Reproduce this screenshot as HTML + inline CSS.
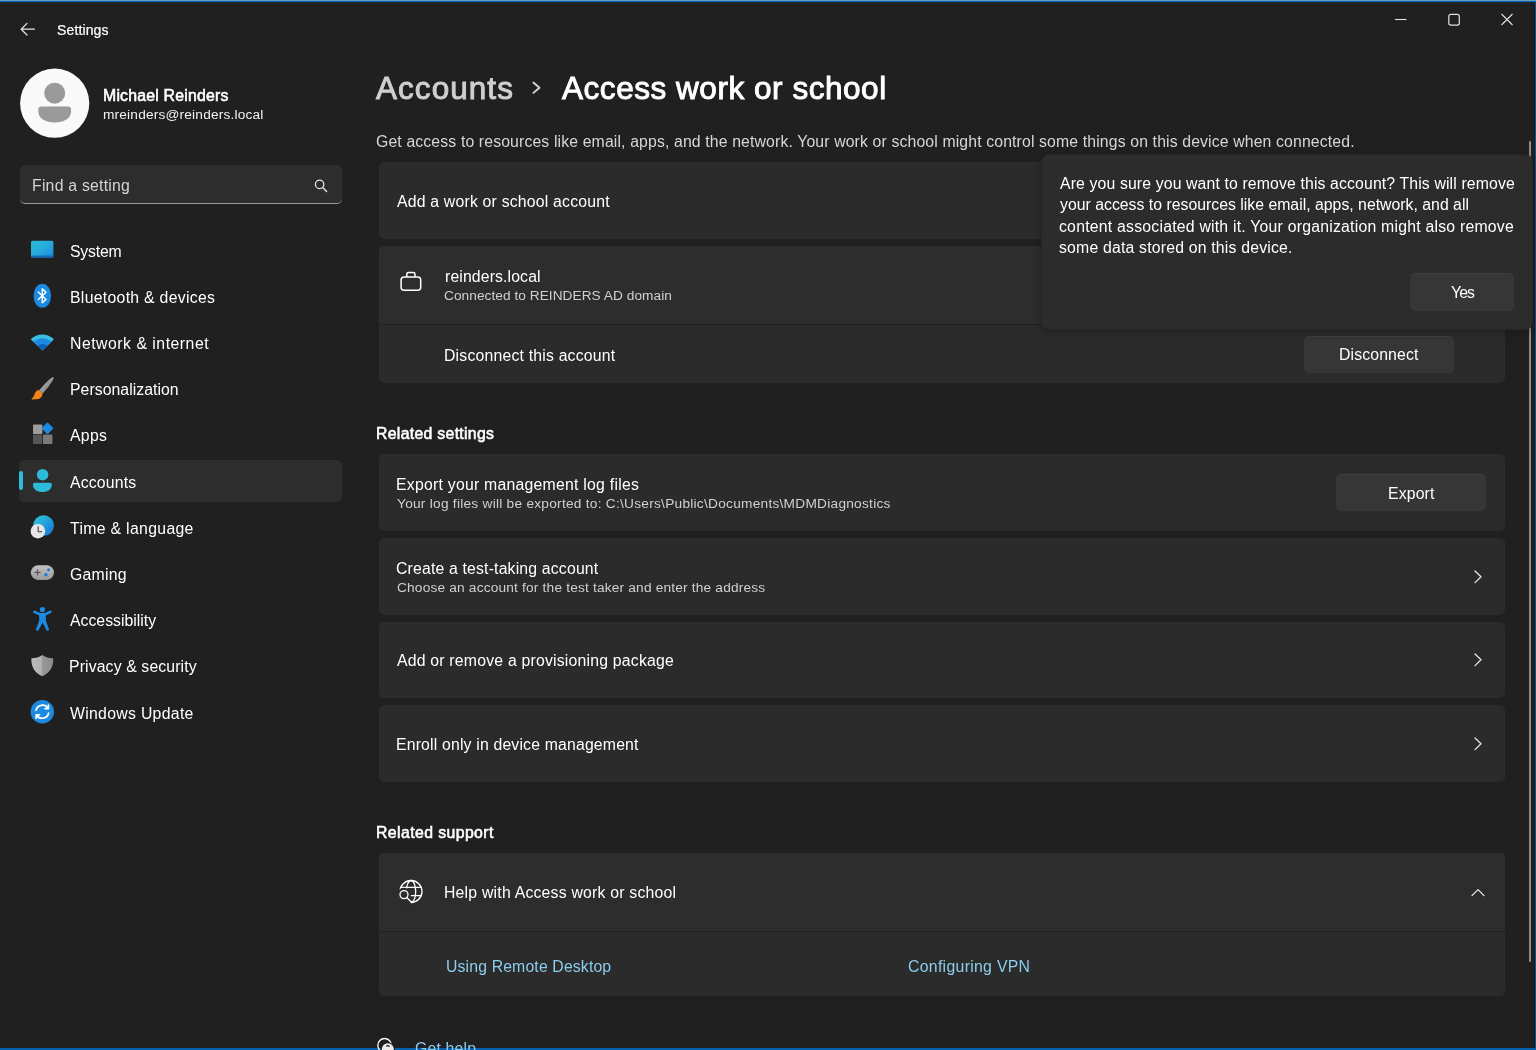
<!DOCTYPE html>
<html lang="en">
<head>
<meta charset="utf-8">
<title>Settings</title>
<style>
*{box-sizing:border-box;margin:0;padding:0}
html,body{width:1536px;height:1050px;overflow:hidden;background:#202020}
body{font-family:"Liberation Sans",sans-serif;color:#fff;position:relative}
.abs{position:absolute}
.t{position:absolute;white-space:pre;line-height:1;color:#fff;will-change:transform}
.card{position:absolute;left:378.5px;width:1126.5px;background:#2b2b2b;border-radius:5px}
.btn{position:absolute;background:#363636;border-radius:5px;border-top:1px solid #3e3e3e}
</style>
</head>
<body>
<!-- window frame -->
<div class="abs" style="left:0;top:0;width:1536px;height:1px;background:#6a9cc0"></div>
<div class="abs" style="left:0;top:1px;width:1536px;height:1px;background:#0a62b4"></div>
<div class="abs" style="left:0;top:2px;width:1536px;height:1px;background:#1b2a38"></div>
<div class="abs" style="left:0;top:1048px;width:1536px;height:2px;background:#0560b0"></div>
<div class="abs" style="left:1535px;top:2px;width:1px;height:1046px;background:#0e4f8c"></div>
<div class="abs" style="left:1534px;top:3px;width:1px;height:1045px;background:#1c1c1c"></div>

<!-- title bar -->
<svg class="abs" style="left:19px;top:21px" width="18" height="16" viewBox="0 0 18 16"><path d="M8 2.4 L2.2 8.2 L8 14 M2.6 8.2 H15.4" fill="none" stroke="#e4e4e4" stroke-width="1.25" stroke-linecap="round" stroke-linejoin="round"/></svg>
<div class="t" id="tSettings" style="left:57.0px;top:22.7px;font-size:14px;color:#ffffff;-webkit-text-stroke:0.22px #ffffff;letter-spacing:0.132px">Settings</div>
<svg class="abs" style="left:1390px;top:10px" width="130" height="20" viewBox="0 0 130 20">
 <path d="M5 9.5 H16.5" stroke="#e0e0e0" stroke-width="1.1" fill="none"/>
 <rect x="58.8" y="4.45" width="10.5" height="10.6" rx="2" fill="none" stroke="#e0e0e0" stroke-width="1.2"/>
 <path d="M111.5 4 L122.5 15 M122.5 4 L111.5 15" stroke="#e0e0e0" stroke-width="1.1" fill="none"/>
</svg>

<!-- avatar -->
<svg class="abs" style="left:19px;top:68px" width="71" height="71" viewBox="0 0 71 71">
 <circle cx="35.7" cy="35.2" r="34.6" fill="#f9f9f9"/>
 <circle cx="35.7" cy="25.2" r="10.5" fill="#9a9a9a"/>
 <path d="M19.3 41.6 A3.2 3.2 0 0 1 22.5 38.4 H48.9 A3.2 3.2 0 0 1 52.1 41.6 V43 C52.1 50.6 45 54.4 35.7 54.4 C26.4 54.4 19.3 50.6 19.3 43 Z" fill="#9a9a9a"/>
</svg>
<div class="t" id="tName" style="left:103.0px;top:87.5px;font-size:15.8px;color:#ffffff;-webkit-text-stroke:0.57px #ffffff;letter-spacing:0.225px">Michael Reinders</div>
<div class="t" id="tMail" style="left:103.0px;top:107.7px;font-size:13.7px;color:#f2f2f2;letter-spacing:0.184px">mreinders@reinders.local</div>

<!-- search -->
<div class="abs" style="left:19.5px;top:165px;width:322.5px;height:38.5px;background:#2d2d2d;border-radius:5px;border-bottom:1px solid #9a9a9a;overflow:hidden"></div>
<div class="t" id="tFind" style="left:32.0px;top:177.9px;font-size:15.8px;color:#d4d4d4;letter-spacing:0.230px">Find a setting</div>
<svg class="abs" style="left:312px;top:177px" width="18" height="18" viewBox="0 0 18 18"><circle cx="7.6" cy="7.4" r="4.2" fill="none" stroke="#e6e6e6" stroke-width="1.3"/><path d="M10.7 10.6 L14.6 14.5" stroke="#e6e6e6" stroke-width="1.4" stroke-linecap="round"/></svg>

<!-- nav -->
<div class="abs" style="left:19px;top:460px;width:323px;height:42px;background:#2d2d2d;border-radius:5px"></div>
<div class="abs" style="left:19px;top:470.6px;width:4.4px;height:19.8px;background:#30bcd9;border-radius:2.2px"></div>
<div class="t" id="n1" style="left:70.0px;top:243.6px;font-size:15.8px;color:#ffffff;letter-spacing:-0.206px">System</div>
<div class="t" id="n2" style="left:70.0px;top:289.8px;font-size:15.8px;color:#ffffff;letter-spacing:0.293px">Bluetooth &amp; devices</div>
<div class="t" id="n3" style="left:70.0px;top:336.0px;font-size:15.8px;color:#ffffff;letter-spacing:0.509px">Network &amp; internet</div>
<div class="t" id="n4" style="left:70.0px;top:382.2px;font-size:15.8px;color:#ffffff;letter-spacing:0.045px">Personalization</div>
<div class="t" id="n5" style="left:70.0px;top:428.4px;font-size:15.8px;color:#ffffff;letter-spacing:0.334px">Apps</div>
<div class="t" id="n6" style="left:70.0px;top:474.6px;font-size:15.8px;color:#ffffff;letter-spacing:0.168px">Accounts</div>
<div class="t" id="n7" style="left:70.0px;top:520.8px;font-size:15.8px;color:#ffffff;letter-spacing:0.326px">Time &amp; language</div>
<div class="t" id="n8" style="left:70.0px;top:567.0px;font-size:15.8px;color:#ffffff;letter-spacing:0.245px">Gaming</div>
<div class="t" id="n9" style="left:70.0px;top:613.2px;font-size:15.8px;color:#ffffff;letter-spacing:0.010px">Accessibility</div>
<div class="t" id="n10" style="left:69.0px;top:659.4px;font-size:15.8px;color:#ffffff;letter-spacing:0.126px">Privacy &amp; security</div>
<div class="t" id="n11" style="left:70.0px;top:705.6px;font-size:15.8px;color:#ffffff;letter-spacing:0.304px">Windows Update</div>
<svg class="abs" style="left:24px;top:232px" width="40" height="500" viewBox="24 232 40 500">
<defs>
 <linearGradient id="gSys" x1="0" y1="0" x2="1" y2="1"><stop offset="0" stop-color="#2bbad8"/><stop offset="0.45" stop-color="#27aedb"/><stop offset="1" stop-color="#1a86dc"/></linearGradient>
 <linearGradient id="gGlobe" x1="0" y1="0" x2="1" y2="1"><stop offset="0.25" stop-color="#2bb8d8"/><stop offset="0.75" stop-color="#1a86de"/></linearGradient>
 <linearGradient id="gBrush" x1="0" y1="0" x2="1" y2="1"><stop offset="0" stop-color="#b4b4b4"/><stop offset="1" stop-color="#7c7c7c"/></linearGradient>
 <linearGradient id="gShield" x1="0" y1="0" x2="1" y2="0"><stop offset="0" stop-color="#bcbcbc"/><stop offset="0.5" stop-color="#b0b0b0"/><stop offset="0.5" stop-color="#989898"/><stop offset="1" stop-color="#8c8c8c"/></linearGradient>
 <linearGradient id="gPad" x1="0" y1="0" x2="0" y2="1"><stop offset="0" stop-color="#c2c2c2"/><stop offset="1" stop-color="#9a9a9a"/></linearGradient>
</defs>
<!-- system -->
<rect x="31" y="240.8" width="22.4" height="16.8" rx="1.6" fill="url(#gSys)"/>
<rect x="31" y="255.6" width="22.4" height="2" fill="#1466b4"/>
<!-- bluetooth -->
<rect x="33.7" y="283.8" width="17.2" height="24" rx="8.6" ry="10.8" fill="#1b8ae0"/>
<path d="M38.3 292 L46 299.4 L42.3 302.8 V288.8 L46 292.2 L38.3 299.6" fill="none" stroke="#fff" stroke-width="1.4" stroke-linejoin="round" stroke-linecap="round"/>
<!-- network -->
<path d="M42.6 350.6 L30.7 339.3 A16.6 16.6 0 0 1 53.9 339.3 Z" fill="#3bc0e0"/>
<path d="M42.6 350.6 L33.6 342 A12.6 12.6 0 0 1 51.4 342 Z" fill="#1b8ae0"/>
<path d="M42.6 350.6 L37.8 346 A6.6 6.6 0 0 1 47.3 346 Z" fill="#0f60b4"/>
<!-- personalization -->
<path d="M52.2 377.2 C53.6 376.6 54 378 53.2 379.4 C50.2 384.6 46.6 389.4 42.6 393.4 L39.2 390.2 C43 385.6 47.6 380.6 52.2 377.2 Z" fill="url(#gBrush)"/>
<path d="M39 390 L42.6 393.4 C42.4 397 39.6 399.2 36 399.2 C34.2 399.2 32.6 399.6 31.4 399.2 C33.4 397.6 34 395.8 34.8 393.6 C35.6 391.4 37 390.2 39 390 Z" fill="#f08418"/>
<!-- apps -->
<rect x="33" y="424.6" width="9.4" height="9.4" rx="1" fill="#9c9c9c"/>
<rect x="33" y="434.6" width="9.4" height="9.4" rx="1" fill="#565656"/>
<rect x="43" y="434.6" width="9.4" height="9.4" rx="1" fill="#7a7a7a"/>
<rect x="43.2" y="424" width="8.6" height="8.6" rx="1" fill="#1b8ae0" transform="rotate(45 47.5 428.3)"/>
<!-- accounts -->
<circle cx="42.6" cy="474.7" r="5.8" fill="#2dbad9"/>
<path d="M32.9 484.6 A1.9 1.9 0 0 1 34.8 482.7 H50 A1.9 1.9 0 0 1 51.9 484.6 C51.9 489.6 47.6 492.1 42.4 492.1 C37.2 492.1 32.9 489.6 32.9 484.6 Z" fill="#2dbad9"/>
<!-- time & language -->
<circle cx="43.6" cy="525.6" r="10.4" fill="url(#gGlobe)"/>
<circle cx="37.9" cy="531.2" r="7.3" fill="#e6e6e6"/>
<path d="M38.2 526.8 V531.6 H41.6" fill="none" stroke="#555" stroke-width="1.3" stroke-linecap="round" stroke-linejoin="round"/>
<!-- gaming -->
<rect x="30.8" y="565.3" width="23.2" height="14.6" rx="7.3" fill="url(#gPad)"/>
<path d="M35 572.4 H40 M37.5 569.9 V574.9" stroke="#5a5a5a" stroke-width="1.3" stroke-linecap="round"/>
<circle cx="48.6" cy="569.8" r="1.5" fill="#1b7ad8"/>
<circle cx="46" cy="574.8" r="1.7" fill="#1b7ad8"/>
<!-- accessibility -->
<circle cx="42.4" cy="609.6" r="2.6" fill="#1b8ae0"/>
<path d="M33.2 611.2 C33.6 610.4 34.4 610.4 35.2 610.8 L40 613 H44.8 L49.6 610.8 C50.4 610.4 51.2 610.4 51.6 611.2 C52 612 51.6 612.6 50.8 613 L45.8 615.6 V620.6 L48.8 628.8 C49.2 629.8 48.8 630.6 48 630.8 C47.2 631 46.6 630.6 46.2 629.8 L42.6 622.4 L38.8 629.8 C38.4 630.6 37.8 631 37 630.8 C36.2 630.6 35.8 629.8 36.2 628.8 L39.2 620.6 V615.6 L34 613 C33.2 612.6 32.8 612 33.2 611.2 Z" fill="#1b8ae0"/>
<!-- privacy -->
<path d="M42.3 655 C45.4 657.2 49 658.2 53.2 658.2 C53.6 666 50.6 672.4 42.3 676.2 C34 672.4 31 666 31.4 658.2 C35.6 658.2 39.2 657.2 42.3 655 Z" fill="url(#gShield)"/>
<!-- windows update -->
<circle cx="42.3" cy="711.7" r="11.7" fill="#1b8ae0"/>
<g fill="none" stroke="#fff" stroke-width="1.7" stroke-linecap="round" stroke-linejoin="round">
 <path d="M36 710.2 A6.6 6.6 0 0 1 47.8 708"/>
 <path d="M48.4 705.2 V708.6 H45"/>
 <path d="M48.6 713.2 A6.6 6.6 0 0 1 36.8 715.4"/>
 <path d="M36.2 718.2 V714.8 H39.6"/>
</g>
</svg>

<div class="t" id="hAcc" style="left:376.0px;top:73.3px;font-size:31.5px;color:#cfcfcf;-webkit-text-stroke:0.94px #cfcfcf;letter-spacing:1.047px">Accounts</div>
<svg class="abs" style="left:530px;top:80px" width="14" height="16" viewBox="0 0 14 16"><path d="M3.4 2.5 L9.5 7.7 L3.4 12.9" fill="none" stroke="#d4d4d4" stroke-width="1.9" stroke-linecap="round" stroke-linejoin="round"/></svg>
<div class="t" id="hTitle" style="left:562.0px;top:73.3px;font-size:31.5px;color:#ffffff;-webkit-text-stroke:0.94px #ffffff;letter-spacing:0.541px">Access work or school</div>
<div class="t" id="desc" style="left:376.0px;top:134.4px;font-size:15.8px;color:#d6d6d6;letter-spacing:0.134px">Get access to resources like email, apps, and the network. Your work or school might control some things on this device when connected.</div>

<!-- scrollbar -->
<div class="abs" style="left:1528.7px;top:140.6px;width:2.5px;height:821.3px;background:#8e8e8e;border-radius:1.25px"></div>

<!-- add account card -->
<div class="card" style="top:162px;height:77px"></div>
<div class="t" id="c1" style="left:397.0px;top:194.1px;font-size:15.8px;color:#ffffff;letter-spacing:0.199px">Add a work or school account</div>

<!-- connected account card -->
<div class="card" style="top:245.5px;height:137px"></div>
<div class="card" style="top:245.5px;height:78px;background:#2d2d2d;border-radius:5px 5px 0 0"></div>
<div class="abs" style="left:379px;top:323.5px;width:1126px;height:1px;background:#222"></div>
<svg class="abs" style="left:398px;top:269px" width="26" height="24" viewBox="0 0 26 24"><rect x="3.1" y="8" width="19.6" height="13.2" rx="3" fill="none" stroke="#fff" stroke-width="1.5"/><path d="M8.8 8 V5.3 A1.7 1.7 0 0 1 10.5 3.6 H15.3 A1.7 1.7 0 0 1 17 5.3 V8" fill="none" stroke="#fff" stroke-width="1.5"/></svg>
<div class="t" id="c2a" style="left:445.0px;top:269.1px;font-size:15.8px;color:#ffffff;letter-spacing:0.123px">reinders.local</div>
<div class="t" id="c2b" style="left:444.0px;top:289.4px;font-size:13.7px;color:#d0d0d0;letter-spacing:0.039px">Connected to REINDERS AD domain</div>
<div class="t" id="c2c" style="left:444.0px;top:348.1px;font-size:15.8px;color:#ffffff;letter-spacing:0.196px">Disconnect this account</div>
<div class="btn" style="left:1304px;top:336px;width:150px;height:37px"></div>
<div class="t" id="bDisc" style="left:1339.0px;top:346.8px;font-size:15.8px;color:#ffffff;letter-spacing:0.136px">Disconnect</div>

<div class="t" id="hRel" style="left:376.0px;top:425.5px;font-size:15.8px;color:#ffffff;-webkit-text-stroke:0.57px #ffffff;letter-spacing:0.311px">Related settings</div>
<div class="card" style="top:454px;height:76.5px"></div>
<div class="t" id="r1a" style="left:396.0px;top:476.5px;font-size:15.8px;color:#ffffff;letter-spacing:0.242px">Export your management log files</div>
<div class="t" id="r1b" style="left:397.0px;top:496.6px;font-size:13.7px;color:#d0d0d0;letter-spacing:0.256px">Your log files will be exported to: C:\Users\Public\Documents\MDMDiagnostics</div>
<div class="btn" style="left:1336px;top:474px;width:150px;height:37px"></div>
<div class="t" id="bExp" style="left:1388.0px;top:485.6px;font-size:15.8px;color:#ffffff;letter-spacing:0.143px">Export</div>

<div class="card" style="top:538px;height:76.5px"></div>
<div class="t" id="r2a" style="left:396.0px;top:560.5px;font-size:15.8px;color:#ffffff;letter-spacing:0.171px">Create a test-taking account</div>
<div class="t" id="r2b" style="left:397.0px;top:580.8px;font-size:13.7px;color:#d0d0d0;letter-spacing:0.185px">Choose an account for the test taker and enter the address</div>
<svg class="abs" style="left:1471px;top:568px" width="14" height="18" viewBox="0 0 14 18"><path d="M4 3 L10 8.8 L4 14.6" fill="none" stroke="#e8e8e8" stroke-width="1.25" stroke-linecap="round" stroke-linejoin="round"/></svg>

<div class="card" style="top:621.7px;height:76.5px"></div>
<div class="t" id="r3" style="left:397.0px;top:652.6px;font-size:15.8px;color:#ffffff;letter-spacing:0.206px">Add or remove a provisioning package</div>
<svg class="abs" style="left:1471px;top:651px" width="14" height="18" viewBox="0 0 14 18"><path d="M4 3 L10 8.8 L4 14.6" fill="none" stroke="#e8e8e8" stroke-width="1.25" stroke-linecap="round" stroke-linejoin="round"/></svg>

<div class="card" style="top:705.3px;height:76.5px"></div>
<div class="t" id="r4" style="left:396.0px;top:736.5px;font-size:15.8px;color:#ffffff;letter-spacing:0.173px">Enroll only in device management</div>
<svg class="abs" style="left:1471px;top:735px" width="14" height="18" viewBox="0 0 14 18"><path d="M4 3 L10 8.8 L4 14.6" fill="none" stroke="#e8e8e8" stroke-width="1.25" stroke-linecap="round" stroke-linejoin="round"/></svg>

<div class="t" id="hSup" style="left:376.0px;top:824.9px;font-size:15.8px;color:#ffffff;-webkit-text-stroke:0.57px #ffffff;letter-spacing:0.418px">Related support</div>
<div class="card" style="top:852.5px;height:143.4px"></div>
<div class="card" style="top:852.5px;height:79px;background:#2d2d2d;border-radius:5px 5px 0 0"></div>
<div class="abs" style="left:378.5px;top:931px;width:1126.5px;height:1px;background:#222"></div>
<svg class="abs" style="left:397px;top:878px" width="28" height="28" viewBox="0 0 28 28"><g fill="none" stroke="#fff" stroke-width="1.3" stroke-linecap="round"><circle cx="14" cy="13.5" r="11"/><ellipse cx="14" cy="13.5" rx="4.7" ry="11"/><path d="M3.8 9.4 H24.2 M3.8 17.6 H24.2"/><circle cx="7" cy="16.8" r="7" fill="#2d2d2d" stroke="none"/><path d="M2 20 H12.2 L14.4 26.5 H4 Z" fill="#2d2d2d" stroke="none"/><circle cx="7" cy="16.6" r="4"/><path d="M10 19.7 L14.6 24.3"/></g></svg>
<div class="t" id="s1" style="left:444.0px;top:885.1px;font-size:15.8px;color:#ffffff;letter-spacing:0.214px">Help with Access work or school</div>
<svg class="abs" style="left:1469px;top:884px" width="18" height="16" viewBox="0 0 18 16"><path d="M3 11.6 L9 5.6 L15 11.6" fill="none" stroke="#e8e8e8" stroke-width="1.25" stroke-linecap="round" stroke-linejoin="round"/></svg>
<div class="t" id="lk1" style="left:446.0px;top:958.8px;font-size:15.8px;color:#8ccdec;letter-spacing:0.143px">Using Remote Desktop</div>
<div class="t" id="lk2" style="left:908.0px;top:958.8px;font-size:15.8px;color:#8ccdec;letter-spacing:0.311px">Configuring VPN</div>
<svg class="abs" style="left:376px;top:1036px" width="22" height="14" viewBox="0 0 22 14"><circle cx="8.6" cy="9.3" r="6.8" fill="none" stroke="#fff" stroke-width="1.3"/><circle cx="11.8" cy="13.4" r="7.2" fill="#202020"/><circle cx="11.8" cy="13.2" r="6" fill="#ececec"/><path d="M10.4 10.6 A1.6 1.6 0 0 1 13.4 10.8" fill="none" stroke="#202020" stroke-width="1.2"/></svg>
<div class="t" id="lk3" style="left:415.0px;top:1040.9px;font-size:15.8px;color:#8ccdec;letter-spacing:0.183px">Get help</div>

<div class="abs" style="left:1041px;top:154px;width:492px;height:176px;background:#2c2c2c;border-radius:8px;border:1px solid #262626;box-shadow:0 3px 8px rgba(0,0,0,0.22)"></div>
<div class="t" id="d1" style="left:1060.0px;top:175.8px;font-size:15.8px;color:#ffffff;letter-spacing:0.133px">Are you sure you want to remove this account? This will remove</div>
<div class="t" id="d2" style="left:1060.0px;top:196.6px;font-size:15.8px;color:#ffffff;letter-spacing:0.011px">your access to resources like email, apps, network, and all</div>
<div class="t" id="d3" style="left:1059.0px;top:218.7px;font-size:15.8px;color:#ffffff;letter-spacing:0.225px">content associated with it. Your organization might also remove</div>
<div class="t" id="d4" style="left:1059.0px;top:239.5px;font-size:15.8px;color:#ffffff;letter-spacing:0.193px">some data stored on this device.</div>
<div class="btn" style="left:1410px;top:273px;width:104px;height:38px"></div>
<div class="t" id="bYes" style="left:1451.0px;top:284.6px;font-size:15.8px;color:#ffffff;letter-spacing:-0.912px">Yes</div>
</body>
</html>
